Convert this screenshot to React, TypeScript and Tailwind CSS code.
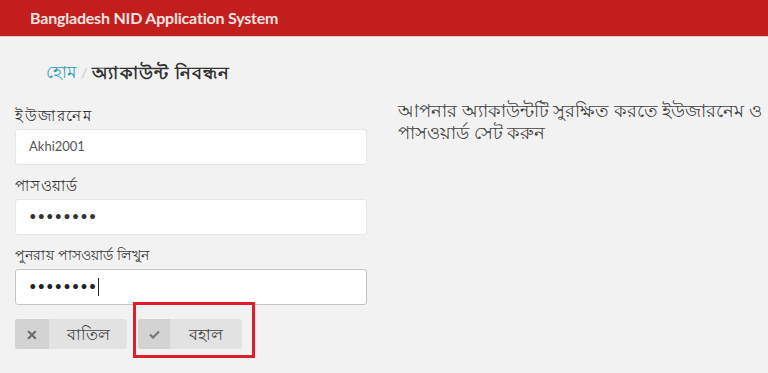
import React from "react";

export default function App() {
  return (
    <div className="w-[768px] h-[373px] overflow-hidden bg-[#f2f2f2] font-['Lato','Noto_Sans',sans-serif]">
      <div className="h-[37px] bg-[#c21f1c] flex items-center pl-[30px] border-b border-[#e9c9c6]">
        <span className="text-[#f6e3e0] text-[16px] font-bold tracking-[-0.2px]">Bangladesh NID Application System</span>
      </div>
      <div className="flex items-center h-[70px] pl-[46px] text-[18px]">
        <span className="text-[#2a9cc0] text-[17px]">হোম</span>
        <span className="text-[#c8c8c8] mx-[5px] text-[14px]">/</span>
        <span className="text-[#333] font-semibold tracking-[1.2px]">অ্যাকাউন্ট নিবন্ধন</span>
      </div>
      <div className="flex">
        <div className="w-[352px] shrink-0 ml-[15px] flex flex-col">
          <label className="text-[15px] text-[#333] h-[22px] leading-[16px] tracking-[1.6px]">ইউজারনেম</label>
          <div className="h-[36px] bg-white border border-[#e6e6e6] rounded-[3px] flex items-center pl-[13px] text-[13px] text-[#555]">Akhi2001</div>
          <label className="text-[15px] text-[#333] h-[22px] leading-[16px] mt-[12px] tracking-[0.8px]">পাসওয়ার্ড</label>
          <div className="h-[36px] bg-white border border-[#e6e6e6] rounded-[3px] flex items-center pl-[13px] text-[13px] text-[#333] tracking-[1px]">••••••••</div>
          <label className="text-[14px] text-[#333] h-[22px] leading-[16px] mt-[12px] tracking-[0.2px]">পুনরায় পাসওয়ার্ড লিখুন</label>
          <div className="h-[36px] bg-white border border-[#c4c4c4] rounded-[3px] flex items-center pl-[13px] text-[13px] text-[#222] tracking-[1px]">••••••••<span className="w-[1px] h-[18px] bg-[#222] ml-[1px]"></span></div>
          <div className="flex mt-[14px] gap-[11px]">
            <div className="w-[112px] h-[30px] bg-[#e2e2e2] rounded-[3px] flex overflow-hidden">
              <div className="w-[34px] bg-[#d3d3d3] flex items-center justify-center text-[#666] text-[14px] font-bold">✕</div>
              <div className="flex-1 flex items-center justify-center text-[16px] text-[#444]">বাতিল</div>
            </div>
            <div className="relative">
              <div className="w-[104px] h-[30px] bg-[#e2e2e2] rounded-[3px] flex overflow-hidden">
                <div className="w-[32px] bg-[#d3d3d3] flex items-center justify-center">
                  <svg width="11" height="9" viewBox="0 0 11 9">
                    <path d="M1 4.5 L4 7.5 L10 1.5" fill="none" stroke="#777" strokeWidth="2.2" />
                  </svg>
                </div>
                <div className="flex-1 flex items-center justify-center text-[16px] text-[#444]">বহাল</div>
              </div>
              <div className="absolute left-[-5px] top-[-17px] w-[122px] h-[56px] border-[3px] border-[#e01d2a]"></div>
            </div>
          </div>
        </div>
        <div className="ml-[31px] mt-[-8px] min-w-0 flex-1 text-[18px] text-[#444] leading-[22px] whitespace-nowrap">
          আপনার অ্যাকাউন্টটি সুরক্ষিত করতে ইউজারনেম ও
          <br />
          পাসওয়ার্ড সেট করুন
        </div>
      </div>
    </div>
  );
}
